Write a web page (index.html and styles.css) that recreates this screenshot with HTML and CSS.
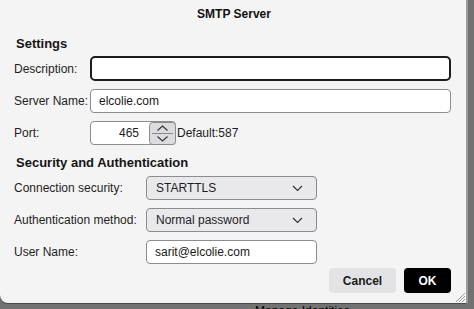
FILE: index.html
```html
<!DOCTYPE html>
<html>
<head>
<meta charset="utf-8">
<link rel="stylesheet" href="styles.css">
</head>
<body>
<div class="dialog">
  <div class="title">SMTP Server</div>
  <div class="heading first">Settings</div>
  <div class="grid g1">
    <div class="lbl">Description:</div>
    <div class="field focus"></div>
    <div class="lbl">Server Name:</div>
    <div class="field">elcolie.com</div>
    <div class="lbl">Port:</div>
    <div class="port-row">
      <div class="port">
        <span class="port-val">465</span>
        <svg class="spin" width="27" height="23" viewBox="0 0 27 23">
          <rect x="0.5" y="0.5" width="26" height="22" rx="3" fill="#dcdce0" stroke="#8a8a8a"/>
          <line x1="3" y1="11.5" x2="24" y2="11.5" stroke="#8a8a8a"/>
          <polyline points="8.5,8.5 13.5,4 18.5,8.5" fill="none" stroke="#333" stroke-width="1.1"/>
          <polyline points="8.5,14.5 13.5,19 18.5,14.5" fill="none" stroke="#333" stroke-width="1.1"/>
        </svg>
      </div>
      <span class="default">Default:587</span>
    </div>
  </div>
  <div class="heading second">Security and Authentication</div>
  <div class="grid g2">
    <div class="lbl">Connection security:</div>
    <div class="select"><span>STARTTLS</span>
      <svg class="chev" width="11" height="7" viewBox="0 0 11 7"><polyline points="1,1 5.5,5.5 10,1" fill="none" stroke="#333" stroke-width="1.2"/></svg>
    </div>
    <div class="lbl">Authentication method:</div>
    <div class="select"><span>Normal password</span>
      <svg class="chev" width="11" height="7" viewBox="0 0 11 7"><polyline points="1,1 5.5,5.5 10,1" fill="none" stroke="#333" stroke-width="1.2"/></svg>
    </div>
    <div class="lbl">User Name:</div>
    <div class="field">sarit@elcolie.com</div>
  </div>
  <div class="buttons">
    <button class="btn cancel">Cancel</button>
    <button class="btn ok">OK</button>
  </div>
  <svg class="grip" width="10" height="10" viewBox="0 0 10 10">
    <line x1="1" y1="10" x2="10" y2="1" stroke="#9a9a9a"/>
    <line x1="4" y1="10" x2="10" y2="4" stroke="#9a9a9a"/>
    <line x1="7" y1="10" x2="10" y2="7" stroke="#9a9a9a"/>
  </svg>
</div>
<div class="behind">Manage Identities</div>
</body>
</html>
```
FILE: styles.css
```css
html, body {
  margin: 0;
  padding: 0;
}
body {
  background: #727272;
  font-family: "Liberation Sans", Arial, sans-serif;
  font-size: 12px;
  color: #1e1e1e;
  width: 474px;
  height: 309px;
  overflow: hidden;
}
.dialog {
  position: relative;
  width: 466px;
  height: 303px;
  box-sizing: border-box;
  background: #f4f4f4;
  border-bottom-left-radius: 8px;
  padding: 0 15px 0 14px;
  box-shadow: 2px 0 0 #9c9c9c, 0 1px 0 #4a4a4a;
}
.title {
  height: 28px;
  line-height: 28px;
  text-align: center;
  font-weight: bold;
  font-size: 12px;
  color: #111;
  padding-left: 3px;
}
.heading {
  font-weight: bold;
  font-size: 13px;
  line-height: 16px;
  margin-left: 2px;
  color: #151515;
}
.heading.first { margin-top: 8px; }
.heading.second { margin-top: 10px; }
.grid {
  display: grid;
  row-gap: 8px;
  align-items: center;
}
.g1 {
  margin-top: 4px;
  grid-template-columns: 76px 361px;
  grid-auto-rows: 24px;
  grid-template-rows: 25px 24px 24px;
}
.g2 {
  margin-top: 5px;
  grid-template-columns: 132px 171px;
  grid-auto-rows: 24px;
}
.lbl {
  white-space: nowrap;
}
.field {
  height: 100%;
  box-sizing: border-box;
  background: #fff;
  border: 1px solid #8c8c8c;
  border-radius: 4px;
  padding: 0 8px;
  display: flex;
  align-items: center;
  color: #1a1a1a;
}
.field.focus {
  border: 2px solid #1c1c1c;
  border-radius: 5px;
}
.port-row {
  display: flex;
  align-items: center;
  height: 100%;
}
.port {
  width: 86px;
  height: 24px;
  box-sizing: border-box;
  background: #fff;
  border: 1px solid #8c8c8c;
  border-radius: 4px;
  display: flex;
  align-items: center;
}
.port-val {
  flex: 1;
  text-align: right;
  padding-right: 10px;
}
.spin {
  display: block;
  margin-right: -1px;
}
.default {
  margin-left: 1px;
}
.select {
  height: 100%;
  box-sizing: border-box;
  background: #e9e9ed;
  border: 1px solid #8c8c8c;
  border-radius: 4px;
  padding: 0 13px 0 9px;
  display: flex;
  align-items: center;
  justify-content: space-between;
}
.chev { display: block; }
.buttons {
  margin-top: 4px;
  display: flex;
  justify-content: flex-end;
  gap: 8px;
}
.btn {
  height: 25px;
  border: none;
  border-radius: 4px;
  font-family: "Liberation Sans", Arial, sans-serif;
  font-size: 12px;
  font-weight: bold;
  padding: 0;
}
.cancel {
  width: 67px;
  background: #e3e3e6;
  color: #1a1a1a;
}
.ok {
  width: 47px;
  background: #000;
  color: #fff;
}
.grip {
  position: absolute;
  right: 1px;
  bottom: 1px;
}
.behind {
  padding-left: 255px;
  line-height: 14px;
  margin-top: 1px;
  color: #000;
  font-size: 12px;
}
```
